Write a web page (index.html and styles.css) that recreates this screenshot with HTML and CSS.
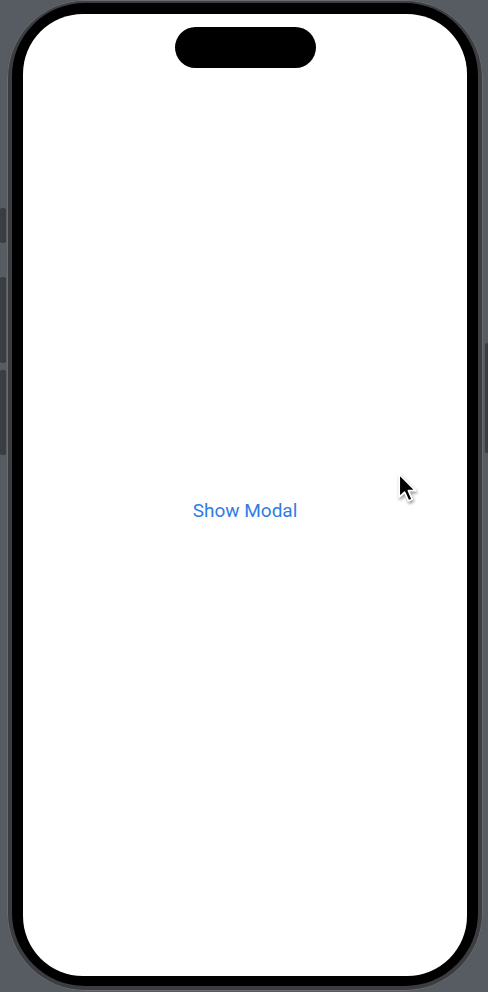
FILE: index.html
```html
<!DOCTYPE html>
<html lang="en">

<head>
    <meta charset="UTF-8">
    <meta name="viewport" content="width=device-width, initial-scale=1.0">
    <title>Show Modal</title>
    <link rel="stylesheet" href="styles.css">
</head>

<body>
    <!-- Side buttons -->
    <div class="side-btn left-1"></div>
    <div class="side-btn left-2"></div>
    <div class="side-btn left-3"></div>
    <div class="side-btn right-1"></div>

    <!-- Phone frame -->
    <div class="phone">
        <div class="bezel">
            <div class="screen">
                <div class="island"></div>
                <div class="content">
                    <a href="#" class="modal-link">Show Modal</a>
                </div>
            </div>
        </div>
    </div>

    <!-- Mouse cursor -->
    <svg class="cursor" width="24" height="33" viewBox="0 0 22 30">
        <path d="M2 1 L2 22 L7 17.5 L10.5 25.5 L14 24 L10.5 16 L17 16 Z" fill="#000" stroke="#fff" stroke-width="1.6" stroke-linejoin="round" />
    </svg>
</body>

</html>
```

FILE: styles.css
```css
/* Base */
body {
    margin: 0;
    padding: 0;
    width: 488px;
    height: 992px;
    overflow: hidden;
    position: relative;
    background: #575c63;
    font-family: Roboto, "Noto Sans", sans-serif;
}

/* Phone frame */
.phone {
    width: 476px;
    height: 991px;
    margin-left: 7px;
    box-sizing: border-box;
    padding: 3px 5px 5px;
    border-radius: 78px;
    background: #3c3d40;
    box-shadow: inset 0 0 0 1px #6b6c70;
    display: flex;
}

.bezel {
    flex: 1;
    display: flex;
    padding: 11px 11px 10px;
    border-radius: 73px;
    background: #000;
}

.screen {
    flex: 1;
    display: flex;
    flex-direction: column;
    align-items: center;
    background: #fff;
    border-radius: 60px;
    padding-top: 13px;
}

.island {
    width: 141px;
    height: 41px;
    border-radius: 21px;
    background: #000;
}

.content {
    flex: 1;
    display: flex;
    flex-direction: column;
    align-items: center;
    padding-top: 431px;
}

.modal-link {
    color: #2f7de1;
    font-size: 19px;
    text-decoration: none;
    line-height: 24px;
}

/* Hardware buttons */
.side-btn {
    position: absolute;
    background: #3a3d42;
    border-radius: 2px;
}

.left-1 {
    left: 0;
    top: 208px;
    width: 6px;
    height: 35px;
}

.left-2 {
    left: 0;
    top: 277px;
    width: 6px;
    height: 86px;
}

.left-3 {
    left: 0;
    top: 370px;
    width: 6px;
    height: 85px;
}

.right-1 {
    right: 0;
    top: 343px;
    width: 3px;
    height: 110px;
}

/* Cursor */
.cursor {
    position: absolute;
    left: 397px;
    top: 473px;
    filter: drop-shadow(1px 2px 1.5px rgba(0, 0, 0, 0.4));
}
```
